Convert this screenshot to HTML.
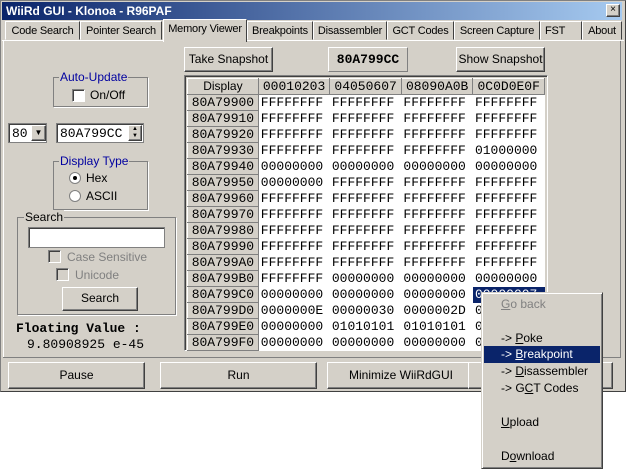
<!DOCTYPE html><html><head><style>
*{box-sizing:border-box;margin:0;padding:0}
body{width:628px;height:470px;background:#fff;position:relative;overflow:hidden;font-family:"Liberation Sans",sans-serif;font-size:12px;color:#000}
.a{position:absolute}
.win{left:0;top:0;width:626px;height:392px;background:#d4d0c8;border:1px solid #808080;border-right-color:#404040;border-bottom-color:#404040}
.title{left:2px;top:2px;width:620px;height:18px;background:linear-gradient(90deg,#0a246a,#a6caf0);color:#fff;font-weight:bold;font-size:12px;padding:2px 4px}
.btn{background:#d4d0c8;border:1px solid;border-color:#fff #404040 #404040 #fff;box-shadow:inset -1px -1px 0 #808080;text-align:center}
.tab{top:21px;height:19px;border:1px solid;border-color:#fff #404040 transparent #fff;padding:3px 0 0;text-align:center;white-space:nowrap;font-size:11px;letter-spacing:-0.2px;overflow:hidden}
.grp{border:1px solid #808080;box-shadow:1px 1px 0 #fff}
.lg{background:#d4d0c8;color:#0000a0;padding:0 1px}
.mono{font-family:"Liberation Mono",monospace;font-size:13px}
.cb{width:13px;height:13px;background:#fff;border:1px solid;border-color:#808080 #fff #fff #808080;box-shadow:inset 1px 1px 0 #404040}
.rb{width:12px;height:12px;border-radius:50%;background:#fff;border:1px solid #808080}
table{border-collapse:collapse}
td{height:16px;padding:0 2px;font-family:"Liberation Mono",monospace;font-size:13px;line-height:15px;white-space:nowrap}
td.h{background:#d4d0c8;border:1px solid;border-color:#fff #808080 #808080 #fff;text-align:center}
td.v{width:73px;background:#fff}
.mi{left:2px;width:116px;height:17px;padding:1px 17px;font-size:12px;white-space:nowrap}
</style></head><body>
<div class="a win"></div>
<div class="a title">WiiRd GUI - Klonoa - R96PAF</div>
<div class="a btn" style="left:606px;top:4px;width:14px;height:13px;font-size:10px;line-height:10px">×</div>
<div class="a" style="left:2px;top:40px;width:622px;height:1px;background:#fff"></div>
<div class="a tab" style="left:5px;width:75px">Code Search</div>
<div class="a tab" style="left:80px;width:82px">Pointer Search</div>
<div class="a tab" style="left:163px;top:19px;height:23px;width:84px;background:#d4d0c8;border-bottom:none">Memory Viewer</div>
<div class="a tab" style="left:247px;width:66px">Breakpoints</div>
<div class="a tab" style="left:313px;width:74px">Disassembler</div>
<div class="a tab" style="left:387px;width:67px">GCT Codes</div>
<div class="a tab" style="left:454px;width:86px">Screen Capture</div>
<div class="a tab" style="left:540px;width:42px;text-align:left;padding-left:4px">FST</div>
<div class="a tab" style="left:582px;width:40px">About</div>
<div class="a" style="left:3px;top:41px;width:1px;height:316px;background:#fff"></div>
<div class="a" style="left:620px;top:41px;width:1px;height:316px;background:#808080"></div>

<div class="a grp" style="left:53px;top:77px;width:95px;height:30px"></div>
<div class="a lg" style="left:59px;top:70px">Auto-Update</div>
<div class="a cb" style="left:72px;top:89px"></div><div class="a" style="left:90px;top:88px">On/Off</div>

<div class="a" style="left:8px;top:123px;width:39px;height:20px;background:#fff;border:1px solid #808080;box-shadow:inset 1px 1px 0 #404040;padding:2px 3px" ><span class="mono">80</span></div>
<div class="a btn" style="left:31px;top:125px;width:15px;height:16px;font-size:8px;line-height:14px">▼</div>
<div class="a" style="left:56px;top:123px;width:88px;height:20px;background:#fff;border:1px solid #808080;box-shadow:inset 1px 1px 0 #404040;padding:2px 3px"><span class="mono">80A799CC</span></div>
<div class="a btn" style="left:128px;top:125px;width:14px;height:16px;font-size:6px;line-height:7px">▲<br>▼</div>

<div class="a grp" style="left:53px;top:161px;width:95px;height:49px"></div>
<div class="a lg" style="left:59px;top:154px">Display Type</div>
<div class="a rb" style="left:69px;top:172px"><div style="width:4px;height:4px;background:#000;border-radius:50%;margin:3px"></div></div>
<div class="a" style="left:86px;top:171px">Hex</div>
<div class="a rb" style="left:69px;top:190px"></div><div class="a" style="left:86px;top:189px">ASCII</div>

<div class="a grp" style="left:17px;top:217px;width:159px;height:98px"></div>
<div class="a" style="left:24px;top:210px;background:#d4d0c8;padding:0 1px">Search</div>
<div class="a" style="left:28px;top:227px;width:137px;height:21px;background:#fff;border:1px solid #808080;box-shadow:inset 1px 1px 0 #404040"></div>
<div class="a cb" style="left:48px;top:250px;background:#d4d0c8"></div><div class="a" style="left:67px;top:250px;color:#808080">Case Sensitive</div>
<div class="a cb" style="left:56px;top:268px;background:#d4d0c8"></div><div class="a" style="left:75px;top:268px;color:#808080">Unicode</div>
<div class="a btn" style="left:62px;top:287px;width:76px;height:24px;line-height:21px">Search</div>
<div class="a mono" style="left:16px;top:321px;font-weight:bold;font-size:13px">Floating Value :</div>
<div class="a mono" style="left:27px;top:337px">9.80908925 e-45</div>

<div class="a btn" style="left:184px;top:47px;width:89px;height:25px;line-height:22px">Take Snapshot</div>
<div class="a" style="left:328px;top:47px;width:80px;height:25px;border:1px solid;border-color:#fff #808080 #808080 #fff;text-align:center;line-height:23px;font-family:'Liberation Mono',monospace;font-weight:bold;font-size:13px">80A799CC</div>
<div class="a btn" style="left:456px;top:47px;width:89px;height:25px;line-height:22px">Show Snapshot</div>

<div class="a" style="left:184px;top:75px;width:364px;height:276px;background:#d4d0c8;border:1px solid;border-color:#808080 #fff #fff #808080;box-shadow:inset 1px 1px 0 #404040;padding:2px">
<table id="t">
<tr><td class="h" style="width:72px;font-family:'Liberation Sans';font-size:12px">Display</td><td class="h" style="width:73px">00010203</td><td class="h" style="width:73px">04050607</td><td class="h" style="width:73px">08090A0B</td><td class="h" style="width:71px">0C0D0E0F</td></tr>
<tr><td class="h">80A79900</td><td class="v">FFFFFFFF</td><td class="v">FFFFFFFF</td><td class="v">FFFFFFFF</td><td class="v">FFFFFFFF</td></tr>
<tr><td class="h">80A79910</td><td class="v">FFFFFFFF</td><td class="v">FFFFFFFF</td><td class="v">FFFFFFFF</td><td class="v">FFFFFFFF</td></tr>
<tr><td class="h">80A79920</td><td class="v">FFFFFFFF</td><td class="v">FFFFFFFF</td><td class="v">FFFFFFFF</td><td class="v">FFFFFFFF</td></tr>
<tr><td class="h">80A79930</td><td class="v">FFFFFFFF</td><td class="v">FFFFFFFF</td><td class="v">FFFFFFFF</td><td class="v">01000000</td></tr>
<tr><td class="h">80A79940</td><td class="v">00000000</td><td class="v">00000000</td><td class="v">00000000</td><td class="v">00000000</td></tr>
<tr><td class="h">80A79950</td><td class="v">00000000</td><td class="v">FFFFFFFF</td><td class="v">FFFFFFFF</td><td class="v">FFFFFFFF</td></tr>
<tr><td class="h">80A79960</td><td class="v">FFFFFFFF</td><td class="v">FFFFFFFF</td><td class="v">FFFFFFFF</td><td class="v">FFFFFFFF</td></tr>
<tr><td class="h">80A79970</td><td class="v">FFFFFFFF</td><td class="v">FFFFFFFF</td><td class="v">FFFFFFFF</td><td class="v">FFFFFFFF</td></tr>
<tr><td class="h">80A79980</td><td class="v">FFFFFFFF</td><td class="v">FFFFFFFF</td><td class="v">FFFFFFFF</td><td class="v">FFFFFFFF</td></tr>
<tr><td class="h">80A79990</td><td class="v">FFFFFFFF</td><td class="v">FFFFFFFF</td><td class="v">FFFFFFFF</td><td class="v">FFFFFFFF</td></tr>
<tr><td class="h">80A799A0</td><td class="v">FFFFFFFF</td><td class="v">FFFFFFFF</td><td class="v">FFFFFFFF</td><td class="v">FFFFFFFF</td></tr>
<tr><td class="h">80A799B0</td><td class="v">FFFFFFFF</td><td class="v">00000000</td><td class="v">00000000</td><td class="v">00000000</td></tr>
<tr><td class="h">80A799C0</td><td class="v">00000000</td><td class="v">00000000</td><td class="v">00000000</td><td class="v" style="background:#0a246a;color:#fff">00000007</td></tr>
<tr><td class="h">80A799D0</td><td class="v">0000000E</td><td class="v">00000030</td><td class="v">0000002D</td><td class="v">00000000</td></tr>
<tr><td class="h">80A799E0</td><td class="v">00000000</td><td class="v">01010101</td><td class="v">01010101</td><td class="v">00000000</td></tr>
<tr><td class="h">80A799F0</td><td class="v">00000000</td><td class="v">00000000</td><td class="v">00000000</td><td class="v">00000000</td></tr>
</table></div>

<div class="a" style="left:3px;top:357px;width:618px;height:1px;background:#808080"></div>
<div class="a btn" style="left:8px;top:362px;width:137px;height:27px;line-height:25px">Pause</div>
<div class="a btn" style="left:160px;top:362px;width:157px;height:27px;line-height:25px">Run</div>
<div class="a btn" style="left:327px;top:362px;width:148px;height:27px;line-height:25px">Minimize WiiRdGUI</div>
<div class="a btn" style="left:468px;top:362px;width:145px;height:27px"></div>

<div class="a" style="left:481px;top:292px;width:122px;height:177px;background:#d4d0c8;border:1px solid;border-color:#d4d0c8 #404040 #404040 #d4d0c8;box-shadow:inset 1px 1px 0 #fff,inset -1px -1px 0 #808080">
<div class="a mi" style="top:3px;color:#808080"><u>G</u>o back</div>
<div class="a mi" style="top:37px">-&gt; <u>P</u>oke</div>
<div class="a mi" style="top:53px;background:#0a246a;color:#fff">-&gt; <u>B</u>reakpoint</div>
<div class="a mi" style="top:70px">-&gt; <u>D</u>isassembler</div>
<div class="a mi" style="top:87px">-&gt; G<u>C</u>T Codes</div>
<div class="a mi" style="top:121px"><u>U</u>pload</div>
<div class="a mi" style="top:155px">D<u>o</u>wnload</div>
</div>
</body></html>
